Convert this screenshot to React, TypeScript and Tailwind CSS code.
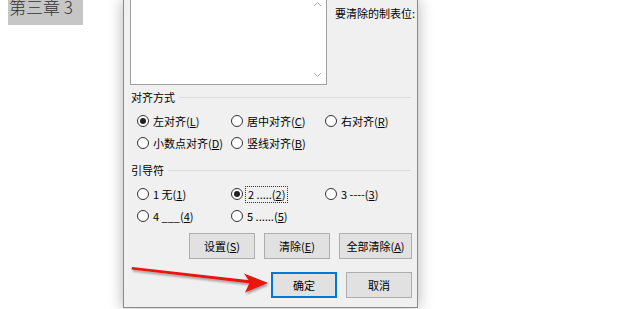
import React from 'react';

const font = { fontFamily: '"Noto Sans CJK SC", "Noto Sans", sans-serif' };

const Key: React.FC<{ k: string }> = ({ k }) => (
  <span>
    (<span className="underline underline-offset-[1px]">{k}</span>)
  </span>
);

const Radio: React.FC<{ checked?: boolean; children: React.ReactNode; focus?: boolean }> = ({
  checked,
  children,
  focus,
}) => (
  <div className="flex items-center h-[22px]">
    <span className="w-[12px] h-[12px] rounded-full border border-[#333] bg-white flex items-center justify-center shrink-0">
      {checked && <span className="w-[6px] h-[6px] rounded-full bg-[#222]" />}
    </span>
    <span
      className={
        focus
          ? 'ml-[2px] px-[2px] leading-[15px] border border-dotted border-[#333]'
          : 'ml-[4px] leading-[15px]'
      }
    >
      {children}
    </span>
  </div>
);

const Group: React.FC<{ title: string }> = ({ title }) => (
  <div className="flex items-center h-[14px] ml-[7px] mr-[6px]">
    <span>{title}</span>
    <div className="flex-1 ml-[4px] h-px bg-[#dcdcdc]" />
  </div>
);

const Btn: React.FC<{ children: React.ReactNode; w: string; primary?: boolean }> = ({
  children,
  w,
  primary,
}) => (
  <div
    className={
      'h-[26px] flex items-center justify-center bg-[#e1e1e1] border ' +
      w +
      (primary ? ' border-[#0078d7] shadow-[inset_0_0_0_1px_#0078d7]' : ' border-[#adadad]')
    }
  >
    {children}
  </div>
);

export default function App() {
  return (
    <div className="relative w-[620px] h-[309px] bg-white overflow-hidden flex text-[11px] text-[#000]" style={font}>
      {/* document heading */}
      <div className="ml-[8px] w-[75px] h-[25px] bg-[#c6c6c6]">
        <div className="ml-px text-[17px] font-light text-[#333] leading-[14px]">第三章 3</div>
      </div>

      {/* dialog */}
      <div className="ml-[40px] w-[295px] h-[308px] bg-[#f0f0f0] border-x border-b border-[#8a8a8a] shadow-[0_0_14px_rgba(0,0,0,0.3)] flex flex-col">
        <div className="flex">
          <div className="ml-[6px] w-[197px] h-[85px] bg-white border-x border-b border-[#a0a0a0] relative">
            <svg className="absolute right-[4px] top-[72px]" width="9" height="6" viewBox="0 0 9 6">
              <path d="M1 1 L4.5 4.5 L8 1" fill="none" stroke="#b0b0b0" strokeWidth="1" />
            </svg>
            <svg className="absolute right-[4px] top-[1px]" width="9" height="6" viewBox="0 0 9 6">
              <path d="M1 5 L4.5 1.5 L8 5" fill="none" stroke="#b0b0b0" strokeWidth="1" />
            </svg>
          </div>
          <div className="ml-[8px] mt-[5px] leading-[16px]">要清除的制表位:</div>
        </div>

        <div className="mt-[5px]">
          <Group title="对齐方式" />
        </div>
        <div className="ml-[13px] mt-[6px] grid grid-cols-[94px_94px_80px]">
          <Radio checked>
            左对齐<Key k="L" />
          </Radio>
          <Radio>
            居中对齐<Key k="C" />
          </Radio>
          <Radio>
            右对齐<Key k="R" />
          </Radio>
          <Radio>
            小数点对齐<Key k="D" />
          </Radio>
          <Radio>
            竖线对齐<Key k="B" />
          </Radio>
        </div>

        <div className="mt-[9px]">
          <Group title="引导符" />
        </div>
        <div className="ml-[13px] mt-[6px] grid grid-cols-[94px_94px_80px]">
          <Radio>
            1 无<Key k="1" />
          </Radio>
          <Radio checked focus>
            2 .....<Key k="2" />
          </Radio>
          <Radio>
            3 ----<Key k="3" />
          </Radio>
          <Radio>
            4 ___<Key k="4" />
          </Radio>
          <Radio>
            5 ......<Key k="5" />
          </Radio>
        </div>

        <div className="mt-[6px] flex justify-end gap-[9px] mr-[5px]">
          <Btn w="w-[66px]">
            设置<Key k="S" />
          </Btn>
          <Btn w="w-[66px]">
            清除<Key k="E" />
          </Btn>
          <Btn w="w-[73px]">
            全部清除<Key k="A" />
          </Btn>
        </div>
        <div className="mt-[13px] flex justify-end gap-[9px] mr-[5px]">
          <Btn w="w-[66px]" primary>
            确定
          </Btn>
          <Btn w="w-[66px]">取消</Btn>
        </div>
      </div>

      {/* red annotation arrow */}
      <svg className="absolute left-0 top-0 pointer-events-none" width="620" height="309">
        <defs>
          <filter id="sh" x="-10%" y="-50%" width="120%" height="200%">
            <feDropShadow dx="1" dy="2" stdDeviation="1.2" floodColor="#000" floodOpacity="0.35" />
          </filter>
        </defs>
        <g filter="url(#sh)">
          <path d="M132 267 L252 280.5 L251 283.5 L131.5 269.5 Z" fill="#e8120e" />
          <path d="M268 283 L244 273.5 L250 282 L245 292.5 Z" fill="#e8120e" />
        </g>
      </svg>
    </div>
  );
}
